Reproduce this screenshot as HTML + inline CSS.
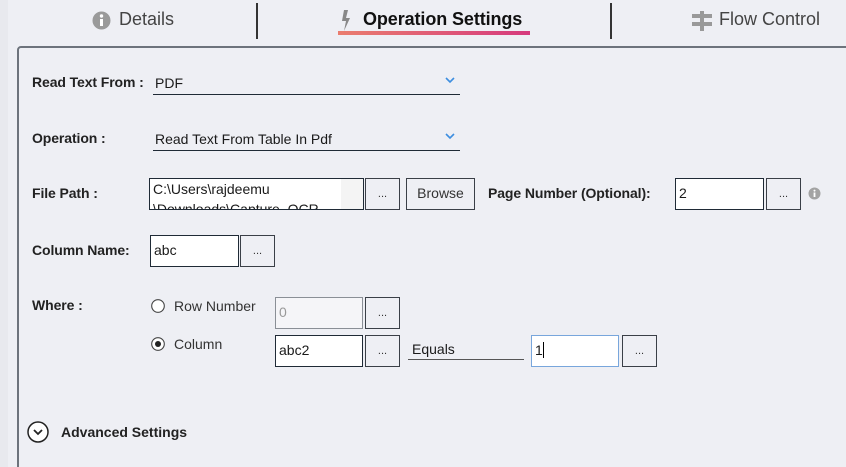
<!DOCTYPE html><html style="overflow:hidden"><head><style>
html,body{overflow:hidden}
body{margin:0;width:846px;height:467px;background:#eeeff4;font-family:"Liberation Sans",sans-serif;color:#1a1a1a;position:relative;overflow:hidden}
.a{position:absolute;white-space:nowrap}
.lb{font-size:14px;font-weight:bold;color:#222;letter-spacing:-0.1px}
.tb{position:absolute;background:#fff;border:1px solid #1f2a36;box-sizing:border-box;font-size:14px;padding:0 3px;line-height:29px}
.bt{position:absolute;background:#eeeff4;border:1px solid #3a3f47;box-sizing:border-box;font-size:11px;text-align:center;line-height:26px;color:#333}
.ul{position:absolute;border-bottom:1.5px solid #1f2a36;font-size:14px}
</style></head><body>
<div class="a" style="left:0;top:0;width:8px;height:467px;background:#e8e9ee"></div>
<svg class="a" style="left:92px;top:11px" width="19" height="19"><circle cx="9.5" cy="9.5" r="9" fill="#9a9a9a"/><rect x="8" y="8" width="3" height="7" fill="#fff"/><circle cx="9.5" cy="5" r="1.7" fill="#fff"/></svg>
<div class="a" style="left:119px;top:9px;font-size:18px;color:#444">Details</div>
<div class="a" style="left:256px;top:3px;width:1.5px;height:36px;background:#333"></div>
<svg class="a" style="left:340px;top:10px" width="12" height="22"><path d="M4 0 L2 11 L6 11 L4 21 L10 8 L6 8 L8 0Z" fill="#888"/></svg>
<div class="a" style="left:363px;top:9px;font-size:18px;font-weight:bold;color:#111;letter-spacing:-0.1px">Operation Settings</div>
<div class="a" style="left:338px;top:31px;width:192px;height:4px;background:linear-gradient(90deg,#ea7d6e,#d63a7d)"></div>
<div class="a" style="left:610px;top:3px;width:1.5px;height:36px;background:#333"></div>
<svg class="a" style="left:692px;top:11px" width="20" height="20"><rect x="8" y="0" width="4" height="20" fill="#999"/><rect x="0" y="3" width="20" height="4" fill="#999"/><rect x="0" y="11" width="20" height="4" fill="#999"/></svg>
<div class="a" style="left:719px;top:9px;font-size:18px;color:#444">Flow Control</div>
<div class="a" style="left:17px;top:46px;width:850px;height:440px;border:2px solid #6d737c;border-radius:4px;box-sizing:border-box"></div>
<div class="a lb" style="left:32px;top:74px">Read Text From :</div>
<div class="ul" style="left:153px;top:75px;width:307px;height:19px"><span style="margin-left:2px">PDF</span></div>
<svg class="a" style="left:445px;top:77px" width="10" height="7"><path d="M1 1 L5 5 L9 1" stroke="#3d8ee0" stroke-width="1.6" fill="none"/></svg>
<div class="a lb" style="left:32px;top:130px">Operation :</div>
<div class="ul" style="left:153px;top:131px;width:307px;height:19px"><span style="margin-left:2px">Read Text From Table In Pdf</span></div>
<svg class="a" style="left:445px;top:133px" width="10" height="7"><path d="M1 1 L5 5 L9 1" stroke="#3d8ee0" stroke-width="1.6" fill="none"/></svg>
<div class="a lb" style="left:32px;top:185px">File Path :</div>
<div class="tb" style="left:149px;top:178px;width:215px;height:32px;line-height:20px;overflow:hidden;padding-top:0">C:\Users\rajdeemu<br>\Downloads\Capture_OCR<div style="position:absolute;right:0;top:0;width:22px;height:30px;background:#f4f4f4"></div></div>
<div class="bt" style="left:365px;top:178px;width:35px;height:32px;line-height:30px">...</div>
<div class="bt" style="left:406px;top:178px;width:69px;height:32px;line-height:29px;font-size:14px">Browse</div>
<div class="a lb" style="left:488px;top:185px">Page Number (Optional):</div>
<div class="tb" style="left:675px;top:178px;width:89px;height:32px">2</div>
<div class="bt" style="left:766px;top:178px;width:35px;height:32px;line-height:30px">...</div>
<svg class="a" style="left:808px;top:187px" width="13" height="13"><circle cx="6.5" cy="6.5" r="6" fill="#a3a3a3"/><rect x="5.6" y="5.5" width="1.8" height="4.5" fill="#fff"/><circle cx="6.5" cy="3.6" r="1" fill="#fff"/></svg>
<div class="a lb" style="left:32px;top:242px">Column Name:</div>
<div class="tb" style="left:150px;top:235px;width:89px;height:32px">abc</div>
<div class="bt" style="left:240px;top:235px;width:35px;height:32px;line-height:30px">...</div>
<div class="a lb" style="left:32px;top:297px">Where :</div>
<svg class="a" style="left:151px;top:299px" width="14" height="14"><circle cx="7" cy="7" r="6.3" fill="#fff" stroke="#444" stroke-width="1.1"/></svg>
<div class="a" style="left:174px;top:298px;font-size:14px;color:#333">Row Number</div>
<div class="tb" style="left:275px;top:297px;width:88px;height:32px;background:#f5f5f8;border-color:#8a8f96;color:#999">0</div>
<div class="bt" style="left:365px;top:297px;width:35px;height:32px;line-height:30px">...</div>
<svg class="a" style="left:151px;top:337px" width="14" height="14"><circle cx="7" cy="7" r="6.3" fill="#fff" stroke="#444" stroke-width="1.1"/><circle cx="7" cy="7" r="3" fill="#222"/></svg>
<div class="a" style="left:174px;top:336px;font-size:14px;color:#333">Column</div>
<div class="tb" style="left:275px;top:335px;width:88px;height:32px">abc2</div>
<div class="bt" style="left:365px;top:335px;width:35px;height:32px;line-height:30px">...</div>
<div class="ul" style="left:408px;top:341px;width:116px;height:18px;border-bottom-color:#555"><span style="margin-left:4px">Equals</span></div>
<div class="tb" style="left:531px;top:335px;width:88px;height:32px;border-color:#78a6dc">1<span style="border-left:1.5px solid #000"> </span></div>
<div class="bt" style="left:622px;top:335px;width:35px;height:32px;line-height:30px">...</div>
<svg class="a" style="left:27px;top:421px" width="22" height="22"><circle cx="11" cy="11" r="10" fill="#fff" stroke="#222" stroke-width="1.5"/><path d="M7 9 L11 13 L15 9" stroke="#222" stroke-width="1.8" fill="none"/></svg>
<div class="a" style="left:61px;top:424px;font-size:14px;font-weight:bold;color:#222">Advanced Settings</div>
</body></html>
